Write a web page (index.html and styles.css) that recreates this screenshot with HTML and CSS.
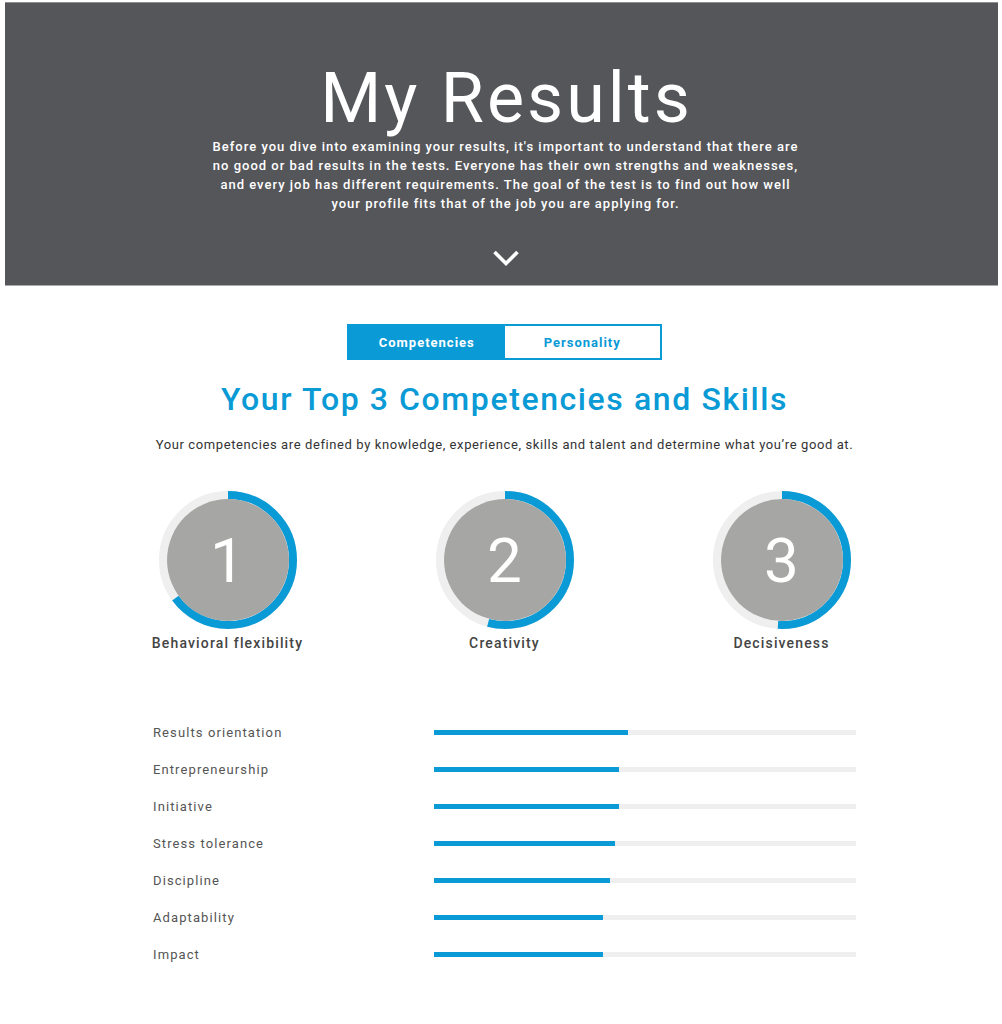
FILE: index.html
```html
<!DOCTYPE html>
<html>
<head>
<meta charset="utf-8">
<link rel="stylesheet" href="styles.css">
</head>
<body>
<header class="hero">
  <h1 class="hero-title">My Results</h1>
  <p class="hero-text">Before you dive into examining your results, it's important to understand that there are<br>no good or bad results in the tests. Everyone has their own strengths and weaknesses,<br>and every job has different requirements. The goal of the test is to find out how well<br>your profile fits that of the job you are applying for.</p>
  <div class="hero-arrow">
    <svg width="28" height="18" viewBox="0 0 28 18"><path d="M2.5 3 L14 14.5 L25.5 3" fill="none" stroke="#fff" stroke-width="3.6" stroke-linecap="butt" stroke-linejoin="miter"/></svg>
  </div>
</header>
<main class="content">
  <div class="tabs">
    <div class="tab tab-active">Competencies</div>
    <div class="tab">Personality</div>
  </div>
  <h2 class="heading">Your Top 3 Competencies and Skills</h2>
  <p class="subtitle">Your competencies are defined by knowledge, experience, skills and talent and determine what you’re good at.</p>

  <div class="tops">
    <div class="top">
      <div class="ring">
        <svg width="140" height="140" viewBox="0 0 140 140">
          <circle cx="70" cy="70" r="65" fill="none" stroke="#efefef" stroke-width="8"/>
          <circle cx="70" cy="70" r="65" fill="none" stroke="#0a9ad5" stroke-width="8" stroke-dasharray="265 1000" transform="rotate(-90 70 70)"/>
          <circle cx="70" cy="70" r="61" fill="#a6a6a4"/>
        </svg>
        <span class="ring-num">1</span>
      </div>
      <div class="top-label">Behavioral flexibility</div>
    </div>
    <div class="top">
      <div class="ring">
        <svg width="140" height="140" viewBox="0 0 140 140">
          <circle cx="70" cy="70" r="65" fill="none" stroke="#efefef" stroke-width="8"/>
          <circle cx="70" cy="70" r="65" fill="none" stroke="#0a9ad5" stroke-width="8" stroke-dasharray="221 1000" transform="rotate(-90 70 70)"/>
          <circle cx="70" cy="70" r="61" fill="#a6a6a4"/>
        </svg>
        <span class="ring-num">2</span>
      </div>
      <div class="top-label">Creativity</div>
    </div>
    <div class="top">
      <div class="ring">
        <svg width="140" height="140" viewBox="0 0 140 140">
          <circle cx="70" cy="70" r="65" fill="none" stroke="#efefef" stroke-width="8"/>
          <circle cx="70" cy="70" r="65" fill="none" stroke="#0a9ad5" stroke-width="8" stroke-dasharray="208 1000" transform="rotate(-90 70 70)"/>
          <circle cx="70" cy="70" r="61" fill="#a6a6a4"/>
        </svg>
        <span class="ring-num">3</span>
      </div>
      <div class="top-label">Decisiveness</div>
    </div>
  </div>

  <div class="bars">
    <div class="bar-row"><span class="bar-label">Results orientation</span><div class="bar"><div class="bar-fill" style="width:46%"></div></div></div>
    <div class="bar-row"><span class="bar-label">Entrepreneurship</span><div class="bar"><div class="bar-fill" style="width:43.8%"></div></div></div>
    <div class="bar-row"><span class="bar-label">Initiative</span><div class="bar"><div class="bar-fill" style="width:43.8%"></div></div></div>
    <div class="bar-row"><span class="bar-label">Stress tolerance</span><div class="bar"><div class="bar-fill" style="width:42.9%"></div></div></div>
    <div class="bar-row"><span class="bar-label">Discipline</span><div class="bar"><div class="bar-fill" style="width:41.7%"></div></div></div>
    <div class="bar-row"><span class="bar-label">Adaptability</span><div class="bar"><div class="bar-fill" style="width:40%"></div></div></div>
    <div class="bar-row"><span class="bar-label">Impact</span><div class="bar"><div class="bar-fill" style="width:40%"></div></div></div>
  </div>
</main>
</body>
</html>
```

FILE: styles.css
```css
* { box-sizing: border-box; }
html, body { margin: 0; padding: 0; background: #fff; }
body {
  font-family: Roboto, "Noto Sans", "DejaVu Sans", sans-serif;
  padding-top: 2px;
}
.hero {
  margin: 0 4px 0 5px;
  height: 284px;
  background: #55565a;
  border-top: 1px solid #8d8e91;
  border-bottom: 1px solid #a9aaad;
  padding-top: 60px;
  text-align: center;
  color: #fff;
}
.hero-title {
  margin: 0;
  font-size: 70px;
  line-height: 70px;
  font-weight: 400;
  letter-spacing: 3px;
  padding-left: 10px;
}
.hero-text {
  margin: 4px auto 0;
  width: 640px;
  font-size: 13px;
  line-height: 19px;
  font-weight: 500;
  letter-spacing: 1px;
  padding-left: 8px;
  white-space: nowrap;
}
.hero-arrow {
  margin-top: 36px;
  padding-left: 8px;
  height: 18px;
}
.hero-arrow svg { display: block; margin: 0 auto; }

.content {
  padding-left: 7px;
  display: flex;
  flex-direction: column;
  align-items: center;
}
.tabs {
  margin-top: 38px;
  display: flex;
  border: 2px solid #0a9ad5;
  width: 315px;
  height: 36px;
}
.tab {
  flex: 1;
  display: flex;
  align-items: center;
  justify-content: center;
  font-size: 13px;
  font-weight: 700;
  color: #0a9ad5;
  letter-spacing: 1px;
}
.tab-active {
  background: #0a9ad5;
  color: #fff;
}
.heading {
  margin: 19px 0 0;
  font-size: 32px;
  line-height: 40px;
  font-weight: 500;
  color: #0a9ad5;
  letter-spacing: 1.6px;
}
.subtitle {
  margin: 17px 0 0;
  font-size: 13px;
  line-height: 18px;
  color: #333;
  letter-spacing: 0.6px;
}
.tops {
  margin-top: 36px;
  display: grid;
  grid-template-columns: repeat(3, 277px);
}
.top {
  display: flex;
  flex-direction: column;
  align-items: center;
}
.ring {
  position: relative;
  width: 140px;
  height: 140px;
}
.ring svg { display: block; }
.ring-num {
  position: absolute;
  inset: 0;
  display: flex;
  align-items: center;
  justify-content: center;
  font-size: 62px;
  font-weight: 400;
  color: #fff;
}
.top-label {
  margin-top: 4px;
  font-size: 14px;
  line-height: 18px;
  font-weight: 500;
  color: #444;
  letter-spacing: 1.15px;
}
.bars {
  margin-top: 62px;
  width: 703px;
  display: flex;
  flex-direction: column;
}
.bar-row {
  height: 37px;
  display: flex;
  align-items: center;
}
.bar-label {
  width: 281px;
  font-size: 13px;
  color: #555;
  letter-spacing: 1.1px;
}
.bar {
  width: 422px;
  height: 5px;
  background: #efefef;
}
.bar-fill {
  height: 100%;
  background: #0a9ad5;
}
```
